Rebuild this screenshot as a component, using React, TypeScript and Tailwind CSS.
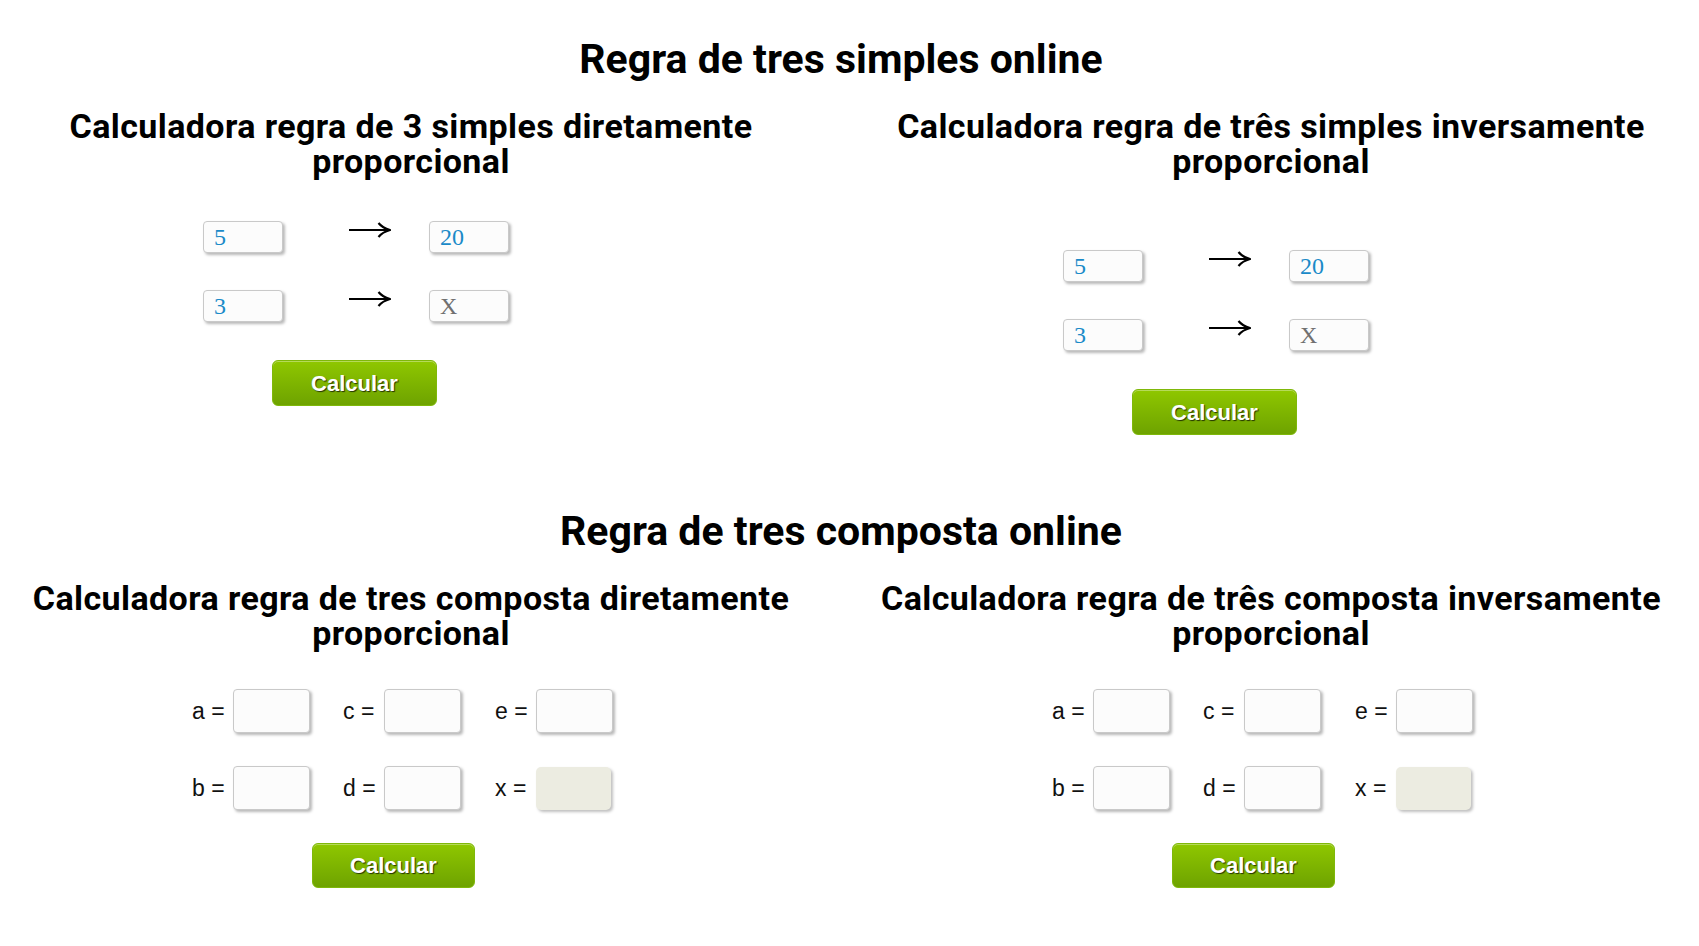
import React from 'react';

const inputBox =
  'bg-[#fcfcfc] border border-[#c9c9c9] rounded-[4px] shadow-[2px_2px_3px_rgba(0,0,0,0.28)]';

function Arrow() {
  return (
    <svg width="42" height="16" viewBox="0 0 42 16" className="block">
      <line x1="0" y1="8" x2="39" y2="8" stroke="#000" strokeWidth="2" />
      <path d="M29.5 1 Q33.5 6 41 8 Q33.5 10 29.5 15" stroke="#000" strokeWidth="2.2" fill="none" strokeLinejoin="round" />
    </svg>
  );
}

function Calcular({ className = '' }: { className?: string }) {
  return (
    <button
      className={`flex items-center justify-center rounded-[6px] border border-[#7fb80a] bg-gradient-to-b from-[#8fc700] to-[#6ea300] text-white font-bold text-[22px] font-['Liberation_Sans',Arial,sans-serif] [text-shadow:1px_1px_1px_rgba(0,0,0,0.7)] shadow-[inset_0_1px_0_rgba(255,255,255,0.35)] ${className}`}
    >
      Calcular
    </button>
  );
}

function Field({ value, placeholder }: { value?: string; placeholder?: string }) {
  return (
    <div className={`w-[80px] h-[32px] flex items-center pl-[10px] font-['Liberation_Serif','Times_New_Roman',serif] text-[24px] leading-none ${inputBox}`}>
      {value ? <span className="text-[#1a8ac8]">{value}</span> : <span className="text-[#707070]">{placeholder}</span>}
    </div>
  );
}

function SimpleCalc({ className = '' }: { className?: string }) {
  const rows = [
    ['5', '20'],
    ['3', ''],
  ];
  return (
    <div className={`pl-[203px] ${className}`}>
      {rows.map((r, i) => (
        <div key={i} className={`flex items-center ${i > 0 ? 'mt-[37px]' : ''}`}>
          <Field value={r[0]} />
          <div className="ml-[66px] mr-[38px] mb-[14px]">
            <Arrow />
          </div>
          <Field value={r[1]} placeholder="X" />
        </div>
      ))}
      <Calcular className="mt-[38px] ml-[69px] w-[165px] h-[46px]" />
    </div>
  );
}

function Cell({ label, result, className = '' }: { label: string; result?: boolean; className?: string }) {
  return (
    <div className={`flex items-center ${className}`}>
      <span className="w-[41px] text-[23px] text-[#111] font-['Liberation_Sans',Arial,sans-serif] whitespace-pre">{label} =</span>
      {result ? (
        <div className="w-[75px] h-[43px] bg-[#ecece1] rounded-[5px] shadow-[2px_2px_3px_rgba(0,0,0,0.25)]" />
      ) : (
        <div className={`w-[77px] h-[44px] ${inputBox}`} />
      )}
    </div>
  );
}

function CompostaCalc({ className = '' }: { className?: string }) {
  return (
    <div className={`pl-[192px] ${className}`}>
      <div className="flex items-center">
        <Cell label="a" />
        <Cell label="c" className="ml-[33px]" />
        <Cell label="e" className="ml-[34px]" />
      </div>
      <div className="flex items-center mt-[33px]">
        <Cell label="b" />
        <Cell label="d" className="ml-[33px]" />
        <Cell label="x" result className="ml-[34px]" />
      </div>
      <Calcular className="mt-[33px] ml-[120px] w-[163px] h-[45px]" />
    </div>
  );
}

function SubTitle({ children }: { children: React.ReactNode }) {
  return <h2 className="text-center text-[34px] leading-[35px] tracking-[0.4px] font-bold">{children}</h2>;
}

export default function App() {
  return (
    <div className="min-h-screen bg-white text-black font-['Roboto','Liberation_Sans',sans-serif]">
      <div className="w-[1682px]">
        <h1 className="pt-[35px] text-center text-[41px] leading-[48px] font-bold">Regra de tres simples online</h1>
        <div className="mt-[26px] flex justify-between items-start">
          <section className="w-[822px]">
            <SubTitle>
              Calculadora regra de 3 simples diretamente
              <br />
              proporcional
            </SubTitle>
            <SimpleCalc className="mt-[42px]" />
          </section>
          <section className="w-[822px]">
            <SubTitle>
              Calculadora regra de três simples inversamente
              <br />
              proporcional
            </SubTitle>
            <SimpleCalc className="mt-[71px]" />
          </section>
        </div>

        <h1 className="mt-[72px] text-center text-[41px] leading-[48px] font-bold">Regra de tres composta online</h1>
        <div className="mt-[26px] flex justify-between items-start pb-[58px]">
          <section className="w-[822px]">
            <SubTitle>
              Calculadora regra de tres composta diretamente
              <br />
              proporcional
            </SubTitle>
            <CompostaCalc className="mt-[38px]" />
          </section>
          <section className="w-[822px]">
            <SubTitle>
              Calculadora regra de três composta inversamente
              <br />
              proporcional
            </SubTitle>
            <CompostaCalc className="mt-[38px]" />
          </section>
        </div>
      </div>
    </div>
  );
}
